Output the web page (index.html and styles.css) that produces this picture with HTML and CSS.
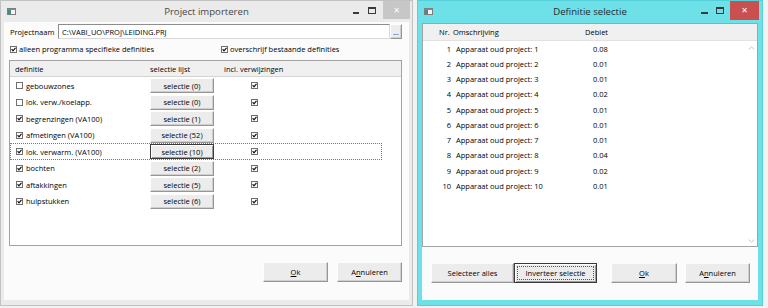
FILE: index.html
```html
<!DOCTYPE html>
<html>
<head>
<meta charset="utf-8">
<title>Project importeren</title>
<link rel="stylesheet" href="styles.css">
</head>
<body>
<div class="win win-left">
  <div class="titlebar">
    <div class="tb-left">
      <svg class="appicon" viewBox="0 0 9 7" width="9" height="7"><rect x="0.5" y="0.5" width="8" height="6" fill="#f4f4f4" stroke="#7d7d7d"/><rect x="1" y="1" width="3" height="5" fill="#3d8f86"/><rect x="1" y="1" width="7" height="1" fill="#8a8a8a"/></svg>
    </div>
    <div class="title">Project importeren</div>
    <div class="tb-right">
      <span class="cap-min"></span><span class="cap-max"></span><span class="cap-close inactive">&#x2715;</span>
    </div>
  </div>
  <div class="client client-left">
    <div class="row-name">
      <span class="lbl">Projectnaam</span>
      <span class="textbox">C:\VABI_UO\PROJ\LEIDING.PRJ</span>
      <span class="btn browse">...</span>
    </div>
    <div class="row-opts">
      <span class="chk-item opt1"><svg class="cb" viewBox="0 0 7 7"><rect x="0.5" y="0.5" width="6" height="6" fill="#fff" stroke="#6f6f6f"/><path d="M1.6 3.2L3 4.8L5.5 1.8" fill="none" stroke="#111" stroke-width="1.2"/></svg>alleen programma specifieke definities</span>
      <span class="chk-item"><svg class="cb" viewBox="0 0 7 7"><rect x="0.5" y="0.5" width="6" height="6" fill="#fff" stroke="#6f6f6f"/><path d="M1.6 3.2L3 4.8L5.5 1.8" fill="none" stroke="#111" stroke-width="1.2"/></svg>overschrijf bestaande definities</span>
    </div>
    <div class="grid">
      <div class="grid-head">
        <span class="h1">definitie</span><span class="h2">selectie lijst</span><span class="h3">incl. verwijzingen</span>
      </div>
      <div class="grid-body">
        <div class="grow">
          <span class="c1"><svg class="cb" viewBox="0 0 7 7"><rect x="0.5" y="0.5" width="6" height="6" fill="#fff" stroke="#6f6f6f"/></svg>gebouwzones</span>
          <span class="btn sel">selectie (0)</span>
          <svg class="cb c3" viewBox="0 0 7 7"><rect x="0.5" y="0.5" width="6" height="6" fill="#fff" stroke="#6f6f6f"/><path d="M1.6 3.2L3 4.8L5.5 1.8" fill="none" stroke="#111" stroke-width="1.2"/></svg>
        </div>
        <div class="grow">
          <span class="c1"><svg class="cb" viewBox="0 0 7 7"><rect x="0.5" y="0.5" width="6" height="6" fill="#fff" stroke="#6f6f6f"/></svg>lok. verw./koelapp.</span>
          <span class="btn sel">selectie (0)</span>
          <svg class="cb c3" viewBox="0 0 7 7"><rect x="0.5" y="0.5" width="6" height="6" fill="#fff" stroke="#6f6f6f"/><path d="M1.6 3.2L3 4.8L5.5 1.8" fill="none" stroke="#111" stroke-width="1.2"/></svg>
        </div>
        <div class="grow">
          <span class="c1"><svg class="cb" viewBox="0 0 7 7"><rect x="0.5" y="0.5" width="6" height="6" fill="#fff" stroke="#6f6f6f"/><path d="M1.6 3.2L3 4.8L5.5 1.8" fill="none" stroke="#111" stroke-width="1.2"/></svg>begrenzingen (VA100)</span>
          <span class="btn sel">selectie (1)</span>
          <svg class="cb c3" viewBox="0 0 7 7"><rect x="0.5" y="0.5" width="6" height="6" fill="#fff" stroke="#6f6f6f"/><path d="M1.6 3.2L3 4.8L5.5 1.8" fill="none" stroke="#111" stroke-width="1.2"/></svg>
        </div>
        <div class="grow">
          <span class="c1"><svg class="cb" viewBox="0 0 7 7"><rect x="0.5" y="0.5" width="6" height="6" fill="#fff" stroke="#6f6f6f"/><path d="M1.6 3.2L3 4.8L5.5 1.8" fill="none" stroke="#111" stroke-width="1.2"/></svg>afmetingen (VA100)</span>
          <span class="btn sel">selectie (52)</span>
          <svg class="cb c3" viewBox="0 0 7 7"><rect x="0.5" y="0.5" width="6" height="6" fill="#fff" stroke="#6f6f6f"/><path d="M1.6 3.2L3 4.8L5.5 1.8" fill="none" stroke="#111" stroke-width="1.2"/></svg>
        </div>
        <div class="grow focus">
          <span class="c1"><svg class="cb" viewBox="0 0 7 7"><rect x="0.5" y="0.5" width="6" height="6" fill="#fff" stroke="#6f6f6f"/><path d="M1.6 3.2L3 4.8L5.5 1.8" fill="none" stroke="#111" stroke-width="1.2"/></svg>lok. verwarm. (VA100)</span>
          <span class="btn sel default">selectie (10)</span>
          <svg class="cb c3" viewBox="0 0 7 7"><rect x="0.5" y="0.5" width="6" height="6" fill="#fff" stroke="#6f6f6f"/><path d="M1.6 3.2L3 4.8L5.5 1.8" fill="none" stroke="#111" stroke-width="1.2"/></svg>
        </div>
        <div class="grow">
          <span class="c1"><svg class="cb" viewBox="0 0 7 7"><rect x="0.5" y="0.5" width="6" height="6" fill="#fff" stroke="#6f6f6f"/><path d="M1.6 3.2L3 4.8L5.5 1.8" fill="none" stroke="#111" stroke-width="1.2"/></svg>bochten</span>
          <span class="btn sel">selectie (2)</span>
          <svg class="cb c3" viewBox="0 0 7 7"><rect x="0.5" y="0.5" width="6" height="6" fill="#fff" stroke="#6f6f6f"/><path d="M1.6 3.2L3 4.8L5.5 1.8" fill="none" stroke="#111" stroke-width="1.2"/></svg>
        </div>
        <div class="grow">
          <span class="c1"><svg class="cb" viewBox="0 0 7 7"><rect x="0.5" y="0.5" width="6" height="6" fill="#fff" stroke="#6f6f6f"/><path d="M1.6 3.2L3 4.8L5.5 1.8" fill="none" stroke="#111" stroke-width="1.2"/></svg>aftakkingen</span>
          <span class="btn sel">selectie (5)</span>
          <svg class="cb c3" viewBox="0 0 7 7"><rect x="0.5" y="0.5" width="6" height="6" fill="#fff" stroke="#6f6f6f"/><path d="M1.6 3.2L3 4.8L5.5 1.8" fill="none" stroke="#111" stroke-width="1.2"/></svg>
        </div>
        <div class="grow">
          <span class="c1"><svg class="cb" viewBox="0 0 7 7"><rect x="0.5" y="0.5" width="6" height="6" fill="#fff" stroke="#6f6f6f"/><path d="M1.6 3.2L3 4.8L5.5 1.8" fill="none" stroke="#111" stroke-width="1.2"/></svg>hulpstukken</span>
          <span class="btn sel">selectie (6)</span>
          <svg class="cb c3" viewBox="0 0 7 7"><rect x="0.5" y="0.5" width="6" height="6" fill="#fff" stroke="#6f6f6f"/><path d="M1.6 3.2L3 4.8L5.5 1.8" fill="none" stroke="#111" stroke-width="1.2"/></svg>
        </div>
      </div>
    </div>
    <div class="actions">
      <span class="btn act"><u>O</u>k</span>
      <span class="btn act">A<u>n</u>nuleren</span>
    </div>
  </div>
</div>

<div class="win win-right">
  <div class="titlebar">
    <div class="tb-left">
      <svg class="appicon" viewBox="0 0 9 7" width="9" height="7"><rect x="0.5" y="0.5" width="8" height="6" fill="#f4f4f4" stroke="#7d7d7d"/><rect x="1" y="1" width="3" height="5" fill="#3d8f86"/><rect x="1" y="1" width="7" height="1" fill="#8a8a8a"/></svg>
    </div>
    <div class="title">Definitie selectie</div>
    <div class="tb-right">
      <span class="cap-min"></span><span class="cap-max"></span><span class="cap-close active">&#x2715;</span>
    </div>
  </div>
  <div class="client client-right">
    <div class="list">
      <div class="list-head">
        <span class="lh-nr">Nr.</span><span class="lh-om">Omschrijving</span><span class="lh-deb">Debiet</span>
      </div>
      <div class="list-body">
        <div class="list-rows">
          <div class="lrow"><span class="nr">1</span><span class="om">Apparaat oud project: 1</span><span class="deb">0.08</span></div>
          <div class="lrow"><span class="nr">2</span><span class="om">Apparaat oud project: 2</span><span class="deb">0.01</span></div>
          <div class="lrow"><span class="nr">3</span><span class="om">Apparaat oud project: 3</span><span class="deb">0.01</span></div>
          <div class="lrow"><span class="nr">4</span><span class="om">Apparaat oud project: 4</span><span class="deb">0.02</span></div>
          <div class="lrow"><span class="nr">5</span><span class="om">Apparaat oud project: 5</span><span class="deb">0.01</span></div>
          <div class="lrow"><span class="nr">6</span><span class="om">Apparaat oud project: 6</span><span class="deb">0.01</span></div>
          <div class="lrow"><span class="nr">7</span><span class="om">Apparaat oud project: 7</span><span class="deb">0.01</span></div>
          <div class="lrow"><span class="nr">8</span><span class="om">Apparaat oud project: 8</span><span class="deb">0.04</span></div>
          <div class="lrow"><span class="nr">9</span><span class="om">Apparaat oud project: 9</span><span class="deb">0.02</span></div>
          <div class="lrow"><span class="nr">10</span><span class="om">Apparaat oud project: 10</span><span class="deb">0.01</span></div>
        </div>
        <div class="vscroll">
          <svg viewBox="0 0 7 4" width="7" height="4"><path d="M0.8 3.4L3.5 0.9L6.2 3.4" fill="none" stroke="#c4c4c4" stroke-width="1"/></svg>
          <svg viewBox="0 0 7 4" width="7" height="4"><path d="M0.8 0.6L3.5 3.1L6.2 0.6" fill="none" stroke="#c4c4c4" stroke-width="1"/></svg>
        </div>
      </div>
    </div>
    <div class="actions-right">
      <span class="btn w83">Selecteer alles</span>
      <span class="btn w83 default">Inverteer selectie</span>
      <span class="btn w66 gap-ok"><u>O</u>k</span>
      <span class="btn w65 gap-an">A<u>n</u>nuleren</span>
    </div>
  </div>
</div>
</body>
</html>
```

FILE: styles.css
```css
* { box-sizing: border-box; margin: 0; padding: 0; }
html, body { width: 768px; height: 308px; overflow: hidden; }
body {
  background: #f2f2f2;
  font-family: "Open Sans", "Noto Sans", sans-serif;
  font-size: 7.5px;
  color: #000;
  display: flex;
  align-items: flex-start;
  gap: 4px;
}

/* windows */
.win {
  display: flex;
  flex-direction: column;
  height: 306px;
  border: 1px solid #c2c2c2;
}
.win-left { width: 413px; background: #ebebeb; }
.win-right { width: 346px; background: #6ee0e7; border-color: #55cfd8; }

.titlebar {
  display: grid;
  grid-template-columns: 1fr auto 1fr;
  align-items: start;
  height: 21px;
}
.win-right .titlebar { height: 22px; }
.tb-left { display: flex; }
.appicon { margin: 7px 0 0 6px; display: block; }
.title {
  font-size: 9.6px;
  line-height: 21px;
  color: #474747;
  white-space: nowrap;
}
.win-right .title { color: #1f2a2b; line-height: 22px; }
.tb-right { display: flex; justify-content: flex-end; align-items: flex-start; }
.cap-min {
  width: 6px; height: 2px; margin-top: 11px; margin-right: 9px;
  background: #3a3a3a;
}
.cap-max {
  width: 8px; height: 7px; margin-top: 6px; margin-right: 7px;
  border: 1px solid #3a3a3a; border-top-width: 2px;
}
.cap-close {
  width: 27px; height: 18px; margin-right: 2px;
  display: flex; align-items: center; justify-content: center;
  color: #fff; font-family: "DejaVu Sans", sans-serif; font-size: 8px; font-weight: bold;
}
.cap-close.inactive { background: #c7c7c7; }
.cap-close.active { background: #c9504f; width: 29px; height: 19px; margin-right: 3px; }
.win-right .cap-min { margin-right: 8px; width: 7px; }
.win-right .cap-max { margin-right: 6px; }

/* client areas */
.client {
  flex: 1;
  background: #fbfbfb;
  display: flex;
  flex-direction: column;
}
.client-left { margin: 0 3px 5px 3px; padding: 2px 7px 0 5px; }
.client-right { margin: 0 4px 5px 4px; }

/* buttons */
.btn {
  display: flex; align-items: center; justify-content: center;
  background: #ececec;
  border: 1px solid;
  border-color: #fdfdfd #969696 #969696 #fdfdfd;
  box-shadow: inset -1px -1px 0 #cfcfcf;
  white-space: nowrap;
  color: #000;
}
.btn.default {
  border: 1px solid #3a3a3a;
  box-shadow: inset 1px 1px 0 #fff, inset -1px -1px 0 #9c9c9c;
  position: relative;
}
.btn u { text-decoration: underline; text-underline-offset: 1px; }

/* left: project name row */
.row-name { display: flex; height: 15px; align-items: stretch; }
.lbl { width: 49px; padding-left: 1px; display: flex; align-items: center; }
.textbox {
  flex: 1; background: #fff;
  border: 1px solid; border-color: #8d8d8d #d8d8d8 #d8d8d8 #8d8d8d;
  padding-left: 3px; display: flex; align-items: center;
}
.browse { width: 12px; font-size: 7px; align-items: flex-end; padding-bottom: 2px; line-height: 1; }

/* left: options */
.row-opts { display: flex; margin-top: 5px; height: 10px; align-items: center; }
.chk-item { display: flex; align-items: center; gap: 2px; white-space: nowrap; }
.opt1 { width: 212px; padding-left: 1px; }
.cb { width: 7px; height: 7px; display: block; flex: none; }

/* left: grid */
.grid {
  margin-top: 6px;
  height: 186px;
  border: 1px solid #a3a3a3;
  background: #fff;
  display: flex; flex-direction: column;
}
.grid-head {
  height: 16px; flex: none;
  background: #f0f0f0;
  border-bottom: 1px solid #d4d4d4;
  display: flex; align-items: center;
}
.h1 { padding-left: 5px; width: 140px; }
.h2 { width: 74px; }
.grow {
  height: 16.5px;
  width: 372px;
  border: 1px dotted transparent;
  display: grid;
  grid-template-columns: 139px 64px auto;
  align-items: center;
}
.grow.focus { border-color: #777; }
.c1 { display: flex; align-items: center; gap: 3px; padding-left: 5px; white-space: nowrap; }
.sel { height: 15px; }
.c3 { margin-left: 37px; }

/* left: actions */
.actions { display: flex; justify-content: flex-end; gap: 9px; margin-top: 16px; }
.act { width: 65px; height: 20px; }

/* right: list */
.list {
  height: 224px;
  border: 1px solid #a3a3a3;
  background: #fff;
  display: flex; flex-direction: column;
}
.list-head {
  height: 17px; flex: none;
  background: #f0f0f0;
  border-bottom: 1px solid #e2e2e2;
  display: flex; align-items: center;
}
.lh-nr { margin-left: 16px; width: 14px; }
.lh-om { width: 132px; }
.list-body { flex: 1; display: flex; }
.list-rows { flex: 1; }
.lrow {
  height: 15.25px;
  display: grid;
  grid-template-columns: 28px 142px auto;
  align-items: center;
}
.nr { text-align: right; }
.om { padding-left: 5px; }
.vscroll {
  width: 11px;
  display: flex; flex-direction: column; justify-content: space-between; align-items: center;
  padding: 5px 0 3px;
}
.vscroll svg { display: block; }

/* right: actions */
.actions-right { display: flex; margin-top: 16px; padding-left: 9px; }
.actions-right .btn { height: 20px; }
.w83 { width: 83px; }
.w66 { width: 66px; }
.w65 { width: 65px; }
.gap-ok { margin-left: 14px; }
.gap-an { margin-left: 8px; }
.actions-right .default::after {
  content: ""; position: absolute; inset: 2px;
  border: 1px dotted #555;
}
```
